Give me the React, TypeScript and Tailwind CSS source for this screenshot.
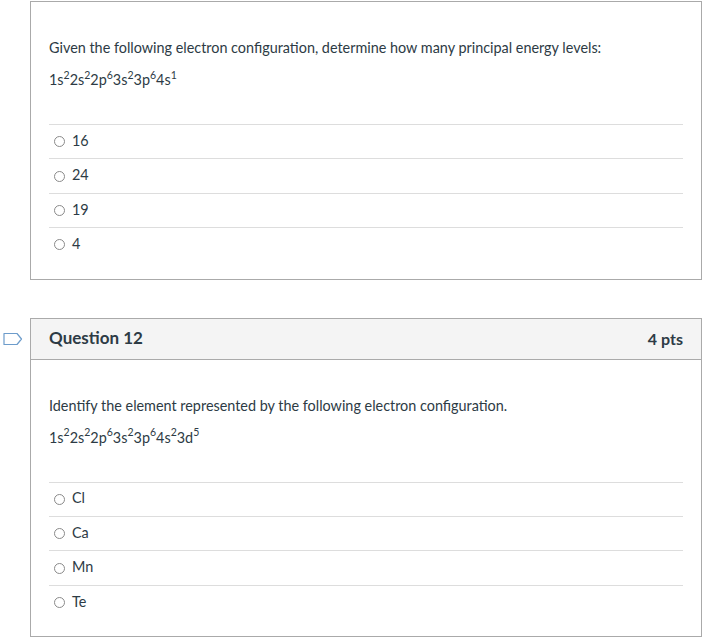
import React from "react";

type Question = {
  title?: string;
  points?: string;
  prompt: string;
  config: [string, string][];
  answers: string[];
};

const QUESTIONS: Question[] = [
  {
    prompt:
      "Given the following electron configuration, determine how many principal energy levels:",
    config: [
      ["1s", "2"],
      ["2s", "2"],
      ["2p", "6"],
      ["3s", "2"],
      ["3p", "6"],
      ["4s", "1"],
    ],
    answers: ["16", "24", "19", "4"],
  },
  {
    title: "Question 12",
    points: "4 pts",
    prompt: "Identify the element represented by the following electron configuration.",
    config: [
      ["1s", "2"],
      ["2s", "2"],
      ["2p", "6"],
      ["3s", "2"],
      ["3p", "6"],
      ["4s", "2"],
      ["3d", "5"],
    ],
    answers: ["Cl", "Ca", "Mn", "Te"],
  },
];

function FlagIcon() {
  return (
    <svg width="20" height="14" viewBox="0 0 20 14" className="shrink-0">
      <path
        d="M1 1.5 H14 L18.5 7 L14 12.5 H1 Z"
        fill="none"
        stroke="#6d9ccb"
        strokeWidth="1.2"
        strokeLinejoin="round"
      />
    </svg>
  );
}

function QuestionCard({ q }: { q: Question }) {
  return (
    <div className="relative">
      {q.title && (
        <div className="absolute left-[3px] top-[14px]">
          <FlagIcon />
        </div>
      )}
      <div className="ml-[30px] w-[672px] border border-[#aaaaaa] bg-white">
        {q.title && (
          <div className="h-[41px] flex items-center justify-between px-[18px] bg-[#f4f4f4] border-b border-[#aaaaaa] font-bold text-[#2d3b45]">
            <span className="text-[17px] pb-[2px]">{q.title}</span>
            <span className="text-[16px]">{q.points}</span>
          </div>
        )}
        <div className="px-[18px] pt-[36px] pb-[17px] text-[14.4px] text-[#2d3b45]">
          <p className="leading-[20px]">{q.prompt}</p>
          <p className="leading-[20px] mt-[12px]">
            {q.config.map(([orb, n]) => (
              <span key={orb}>
                {orb}
                <sup className="text-[10.5px] -top-[0.6em]">{n}</sup>
              </span>
            ))}
          </p>
          <div className="mt-[34px]">
            {q.answers.map((a) => (
              <div
                key={a}
                className="h-[34.4px] pb-[2px] border-t border-[#dddddd] flex items-center"
              >
                <span className="ml-[5px] mt-[2px] w-[11px] h-[11px] rounded-full border border-[#8a8a8a] shrink-0" />
                <span className="ml-[7px]">{a}</span>
              </div>
            ))}
          </div>
        </div>
      </div>
    </div>
  );
}

export default function App() {
  return (
    <div
      className="w-[702px] h-[642px] bg-white pt-[1px] flex flex-col gap-[38px]"
      style={{ fontFamily: "Lato, 'Noto Sans', sans-serif" }}
    >
      {QUESTIONS.map((q, i) => (
        <QuestionCard key={i} q={q} />
      ))}
    </div>
  );
}
